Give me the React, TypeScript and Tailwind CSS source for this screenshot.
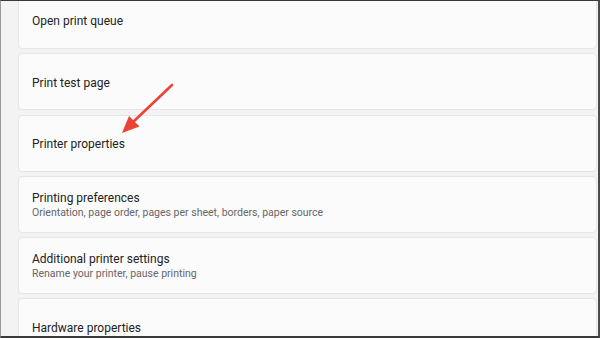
import React from "react";

type Item = { title: string; sub?: string };

const items: Item[] = [
  { title: "Open print queue" },
  { title: "Print test page" },
  { title: "Printer properties" },
  { title: "Printing preferences", sub: "Orientation, page order, pages per sheet, borders, paper source" },
  { title: "Additional printer settings", sub: "Rename your printer, pause printing" },
  { title: "Hardware properties" },
];

export default function App() {
  return (
    <div
      className="relative w-[600px] h-[338px] overflow-hidden bg-[#f3f3f3] border-t border-t-[#3a3a3a] border-l border-l-[#9a9a9a] border-r-2 border-r-[#4a4a4a] border-b-2 border-b-[#3a3a3a]"
      style={{ fontFamily: 'Roboto, Lato, Arial, sans-serif' }}
    >
      <div className="flex flex-col gap-[4.3px] pl-[17px] pr-[1px] -mt-[9px]">
        {items.map((it, i) => (
          <div
            key={i}
            className="h-[57px] shrink-0 flex flex-col justify-center pl-[13px] bg-[#fbfbfb] border border-[#e6e6e6] rounded-[4px]"
          >
            <div className="text-[12px] leading-[15px] text-[#222222] pt-[2.5px]">{it.title}</div>
            {it.sub && (
              <div className="text-[10.5px] leading-[14px] text-[#666666]">{it.sub}</div>
            )}
          </div>
        ))}
      </div>
      <svg className="absolute left-0 top-0" width="600" height="338" viewBox="0 0 600 338">
        <line x1="171" y1="84" x2="131" y2="122" stroke="#ec4336" strokeWidth="2.6" strokeLinecap="round" />
        <polygon points="121,132 138.5,125.5 128,115" fill="#ec4336" />
      </svg>
    </div>
  );
}
